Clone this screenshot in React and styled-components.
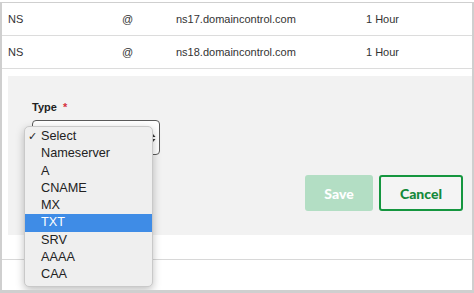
import React from "react";
import styled, { createGlobalStyle } from "styled-components";

const GlobalStyle = createGlobalStyle`
  html, body {
    margin: 0;
    padding: 0;
    background: #ffffff;
  }
  body {
    font-family: "Liberation Sans", Arial, sans-serif;
  }
`;

const records = [
  { type: "NS", name: "@", value: "ns17.domaincontrol.com", ttl: "1 Hour" },
  { type: "NS", name: "@", value: "ns18.domaincontrol.com", ttl: "1 Hour" },
];

const options = [
  "Select",
  "Nameserver",
  "A",
  "CNAME",
  "MX",
  "TXT",
  "SRV",
  "AAAA",
  "CAA",
];

function App() {
  return (
    <>
      <GlobalStyle />
      <Frame>
        {records.map((r) => (
          <Row key={r.value}>
            <Cell>{r.type}</Cell>
            <Cell>{r.name}</Cell>
            <Cell>{r.value}</Cell>
            <Cell>{r.ttl}</Cell>
          </Row>
        ))}
        <FormPanel>
          <Field>
            <Label>
              Type <Required>*</Required>
            </Label>
            <SelectBox>
              <Arrows>
                <svg width="6" height="10" viewBox="0 0 6 10">
                  <path d="M0.5 4 L3 1 L5.5 4 Z" fill="#333" />
                  <path d="M0.5 6 L3 9 L5.5 6 Z" fill="#333" />
                </svg>
              </Arrows>
              <Menu>
                {options.map((o) => (
                  <Option key={o} active={o === "TXT"}>
                    {o === "Select" && <Check>✓</Check>}
                    {o}
                  </Option>
                ))}
              </Menu>
            </SelectBox>
          </Field>
          <Actions>
            <SaveButton disabled>Save</SaveButton>
            <CancelButton>Cancel</CancelButton>
          </Actions>
        </FormPanel>
        <FooterRow />
        <Spacer />
      </Frame>
    </>
  );
}

export default App;

const Frame = styled.div`
  margin-top: 2px;
  width: 474px;
  height: 291px;
  box-sizing: border-box;
  border: 2px solid #cfcfcf;
  border-top-width: 1px;
  border-bottom-width: 3px;
  display: flex;
  flex-direction: column;
  overflow: hidden;
`;

const Row = styled.div`
  display: grid;
  grid-template-columns: 114px 54px 190px 1fr;
  height: 32px;
  align-items: center;
  padding-left: 6px;
  border-bottom: 1px solid #dcdcdc;
  flex-shrink: 0;
`;

const Cell = styled.div`
  font-size: 11px;
  color: #333333;
`;

const FormPanel = styled.div`
  margin: 7px 0 0 6px;
  height: 159px;
  background: #f2f2f2;
  box-sizing: border-box;
  padding: 24px 9px 0 24px;
  display: flex;
  flex-direction: column;
  flex-shrink: 0;
`;

const Field = styled.div`
  display: flex;
  flex-direction: column;
  gap: 6px;
`;

const Label = styled.div`
  font-size: 11px;
  font-weight: 700;
  color: #222222;
  height: 14px;
  line-height: 14px;
`;

const Required = styled.span`
  color: #d6303c;
  margin-left: 3px;
`;

const SelectBox = styled.div`
  position: relative;
  width: 128px;
  height: 35px;
  box-sizing: border-box;
  border: 1px solid #5a5a5a;
  border-radius: 4px;
  background: #ffffff;
`;

const Arrows = styled.div`
  position: absolute;
  right: 3px;
  top: 12px;
  display: flex;
`;

const Menu = styled.div`
  position: absolute;
  left: -9px;
  top: 5px;
  width: 129px;
  box-sizing: border-box;
  padding: 1px 0 2px;
  background: #efefef;
  border: 1px solid #c9c9c9;
  border-radius: 5px;
  box-shadow: 0 3px 8px rgba(0, 0, 0, 0.25);
  z-index: 10;
`;

const Option = styled.div`
  position: relative;
  height: 17.3px;
  line-height: 17.3px;
  padding-left: 16px;
  font-size: 12.7px;
  color: ${(p) => (p.active ? "#ffffff" : "#222222")};
  background: ${(p) => (p.active ? "#3f8ce6" : "transparent")};
`;

const Check = styled.span`
  position: absolute;
  left: 3px;
  font-size: 11px;
`;

const Actions = styled.div`
  margin-top: 20px;
  display: flex;
  justify-content: flex-end;
  gap: 6px;
`;

const BaseButton = styled.button`
  height: 36px;
  box-sizing: border-box;
  font-family: Lato, "Liberation Sans", sans-serif;
  font-weight: 900;
  font-size: 14px;
  border-radius: 3px;
  padding: 0;
`;

const SaveButton = styled(BaseButton)`
  width: 68px;
  border: none;
  background: #b3dec4;
  color: #ffffff;
`;

const CancelButton = styled(BaseButton)`
  width: 84px;
  border: 2px solid #15963f;
  background: #f4f4f4;
  color: #14893b;
`;

const FooterRow = styled.div`
  height: 24px;
  border-bottom: 1px solid #d8d8d8;
  flex-shrink: 0;
`;

const Spacer = styled.div`
  flex: 1;
`;
